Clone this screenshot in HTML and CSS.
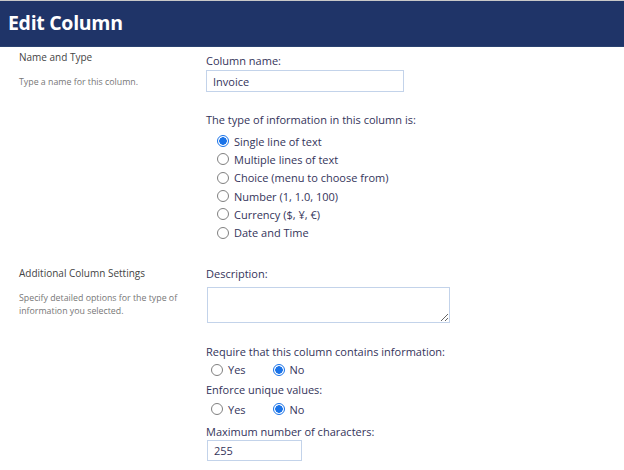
FILE: index.html
```html
<!DOCTYPE html>
<html lang="en">
<head>
    <meta charset="UTF-8">
    <meta name="viewport" content="width=device-width, initial-scale=1.0">
    <title>Edit Column</title>

    <link rel="stylesheet" href="styles.css">

</head>
<body>

<div class="page-header">
  <h1>Edit Column</h1>
</div>

<!-- Name and Type -->
<div class="section section-name">
  <div class="section-info">
    <div class="section-title">Name and Type</div>
    <div class="section-desc">Type a name for this column.</div>
  </div>
  <div class="section-fields">
    <div class="field-label">Column name:</div>
    <input type="text" class="text-input name-input" value="Invoice">

    <div class="field-label type-label">The type of information in this column is:</div>
    <div class="radio-list">
      <label class="radio-row"><span class="radio checked"></span>Single line of text</label>
      <label class="radio-row"><span class="radio"></span>Multiple lines of text</label>
      <label class="radio-row"><span class="radio"></span>Choice (menu to choose from)</label>
      <label class="radio-row"><span class="radio"></span>Number (1, 1.0, 100)</label>
      <label class="radio-row"><span class="radio"></span>Currency ($, ¥, €)</label>
      <label class="radio-row"><span class="radio"></span>Date and Time</label>
    </div>
  </div>
</div>

<!-- Additional Column Settings -->
<div class="section section-settings">
  <div class="section-info">
    <div class="section-title">Additional Column Settings</div>
    <div class="section-desc">Specify detailed options for the type of information you selected.</div>
  </div>
  <div class="section-fields">
    <div class="field-label">Description:</div>
    <textarea class="desc-input"></textarea>

    <div class="field-label require-label">Require that this column contains information:</div>
    <div class="yes-no">
      <label class="radio-row"><span class="radio"></span>Yes</label>
      <label class="radio-row"><span class="radio checked"></span>No</label>
    </div>

    <div class="field-label unique-label">Enforce unique values:</div>
    <div class="yes-no unique-options">
      <label class="radio-row"><span class="radio"></span>Yes</label>
      <label class="radio-row"><span class="radio checked"></span>No</label>
    </div>

    <div class="field-label max-label">Maximum number of characters:</div>
    <input type="text" class="text-input max-input" value="255">
  </div>
</div>

</body>
</html>
```

FILE: styles.css
```css
* {
  box-sizing: border-box;
}

body {
  margin: 0;
  padding: 0;
  font-family: 'Open Sans', 'Noto Sans', sans-serif;
  background-color: #ffffff;
  color: #34345a;
  overflow: hidden;
}

.page-header {
  border-top: 1px solid #c8c8c8;
  background-color: #1f3468;
  border-bottom: 1px solid #2a4270;
  height: 47px;
  padding: 0 8px;
}

.page-header h1 {
  margin: 0;
  color: #ffffff;
  font-size: 19.5px;
  font-weight: 700;
  line-height: 44px;
  letter-spacing: -0.3px;
}

.section {
  display: grid;
  grid-template-columns: 206px 1fr;
}

.section-info {
  padding-left: 19px;
  padding-right: 10px;
}

.section-title {
  font-size: 10px;
  line-height: 14px;
  color: #444444;
}

.section-desc {
  font-size: 8.8px;
  line-height: 13px;
  color: #777777;
}

.section-name .section-info {
  padding-top: 3px;
}

.section-name .section-desc {
  margin-top: 12px;
}

.section-settings {
  margin-top: 24px;
}

.section-settings .section-desc {
  margin-top: 12px;
  width: 180px;
}

.section-name .section-fields {
  padding-top: 6px;
}

.field-label {
  font-size: 11px;
  line-height: 16px;
}

.text-input {
  display: block;
  border: 1px solid #c3d3ea;
  font-family: inherit;
  font-size: 11px;
  color: #34345a;
  padding: 0 6px;
  outline: none;
}

.name-input {
  width: 198px;
  height: 22px;
  margin-top: 1px;
}

.type-label {
  margin-top: 20px;
}

.radio-list {
  margin-top: 4px;
  padding-left: 11px;
}

.radio-row {
  display: flex;
  align-items: center;
  gap: 5px;
  height: 18.3px;
  font-size: 11px;
}

.radio {
  width: 12px;
  height: 12px;
  border: 1px solid #808080;
  border-radius: 50%;
  flex-shrink: 0;
}

.radio.checked {
  border-color: #1a73e8;
  background: radial-gradient(circle, #1a73e8 0 3.5px, #ffffff 4px);
}

.desc-input {
  display: block;
  width: 243px;
  height: 36px;
  margin-top: 5px;
  margin-left: 1px;
  border: 1.5px solid #c3d3ea;
  resize: vertical;
  font-family: inherit;
  outline: none;
}

.require-label {
  margin-top: 21px;
}

.yes-no {
  display: flex;
  gap: 27px;
  padding-left: 5px;
  margin-top: 1px;
}

.unique-label {
  margin-top: 3px;
}

.unique-options {
  margin-top: 2px;
}

.max-label {
  margin-top: 6px;
}

.max-input {
  width: 95px;
  height: 21px;
  margin-top: 0;
  margin-left: 1px;
}
```
